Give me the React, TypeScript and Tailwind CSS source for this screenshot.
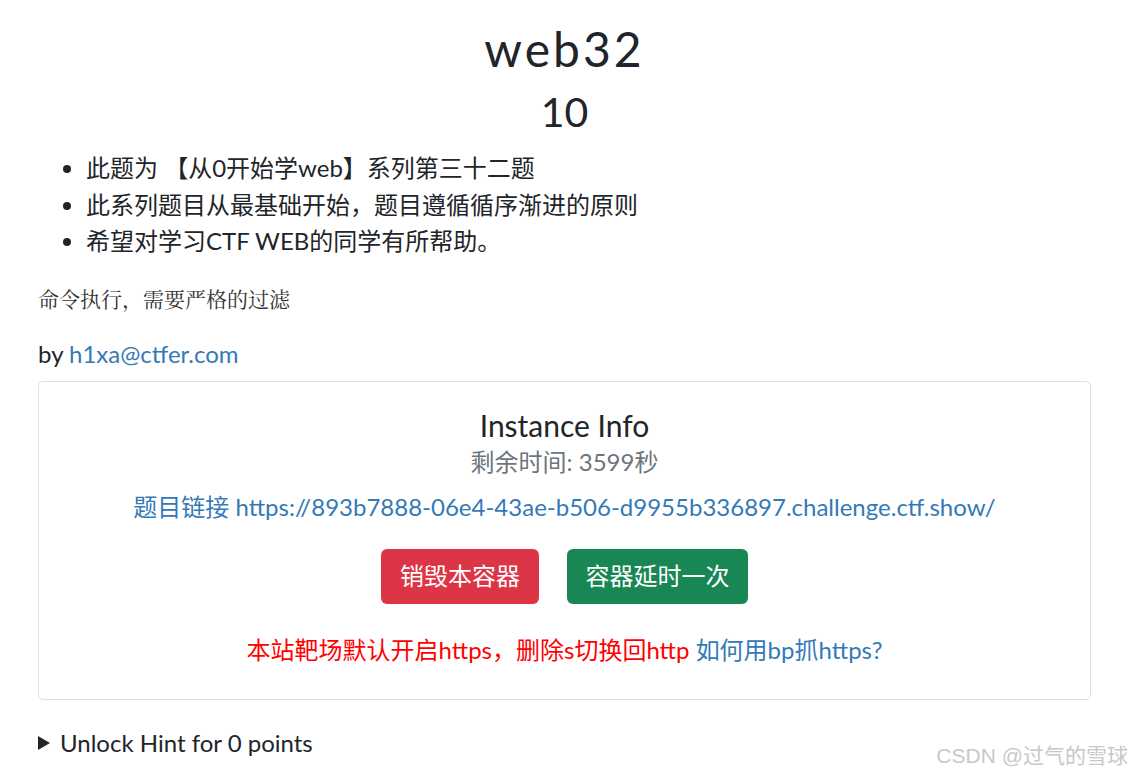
export default function App() {
	return (
		<div
			className="relative min-h-[777px] bg-white pl-[38px] pr-[41px] text-[#212529]"
			style={{ fontFamily: 'Lato, "Noto Sans CJK SC", sans-serif' }}
		>
			<div className="flex flex-col items-center pt-[20px]">
				<h1 className="text-[48px] leading-[58px] tracking-[3px] font-normal">web32</h1>
				<h2 className="mt-[9px] text-[41px] leading-[50px] font-normal">10</h2>
			</div>
			<ul className="mt-[13px] list-disc pl-[48px] text-[24px] leading-[36.5px]">
				<li>此题为 【从0开始学web】系列第三十二题</li>
				<li>此系列题目从最基础开始，题目遵循循序渐进的原则</li>
				<li>希望对学习CTF WEB的同学有所帮助。</li>
			</ul>
			<p
				className="mt-[23px] text-[21px] leading-[30px] text-[#333]"
				style={{ fontFamily: '"Noto Serif CJK SC", "Liberation Serif", serif' }}
			>
				命令执行，需要严格的过滤
			</p>
			<p className="mt-[23px] text-[24px] leading-[36px]">
				by <a className="text-[#337ab7]">h1xa@ctfer.com</a>
			</p>
			<div className="mt-[9px] flex h-[319px] flex-col items-center rounded-[5px] border border-[#dfdfdf] pt-[24px]">
				<h3 className="text-[30px] leading-[38px] font-normal">Instance Info</h3>
				<p className="text-[24px] leading-[36px] text-[#6c757d]">剩余时间: 3599秒</p>
				<p className="mt-[9px] text-[24px] leading-[36px] text-[#337ab7]">
					题目链接 https://893b7888-06e4-43ae-b506-d9955b336897.challenge.ctf.show/
				</p>
				<div className="mt-[24px] flex gap-[28px]">
					<button className="h-[55px] w-[158px] rounded-[6px] bg-[#dc3545] text-[24px] text-white">
						销毁本容器
					</button>
					<button className="h-[55px] w-[181px] rounded-[6px] bg-[#198754] text-[24px] text-white">
						容器延时一次
					</button>
				</div>
				<p className="mt-[28px] text-[24px] leading-[36px]">
					<span className="text-[#ff0000]">本站靶场默认开启https，删除s切换回http</span>{" "}
					<a className="text-[#337ab7]">如何用bp抓https?</a>
				</p>
			</div>
			<div className="mt-[26px] flex items-center gap-[10px] text-[24px] leading-[34px]">
				<svg width="12" height="14" viewBox="0 0 12 14">
					<path d="M0 0 L12 7 L0 14 Z" fill="#212529" />
				</svg>
				<span>Unlock Hint for 0 points</span>
			</div>
			<div
				className="absolute bottom-[6px] right-[4px] text-[21px] text-[#c8c8c8]"
				style={{ fontFamily: '"Liberation Sans", "Noto Sans CJK SC", sans-serif' }}
			>
				CSDN @过气的雪球
			</div>
		</div>
	);
}
